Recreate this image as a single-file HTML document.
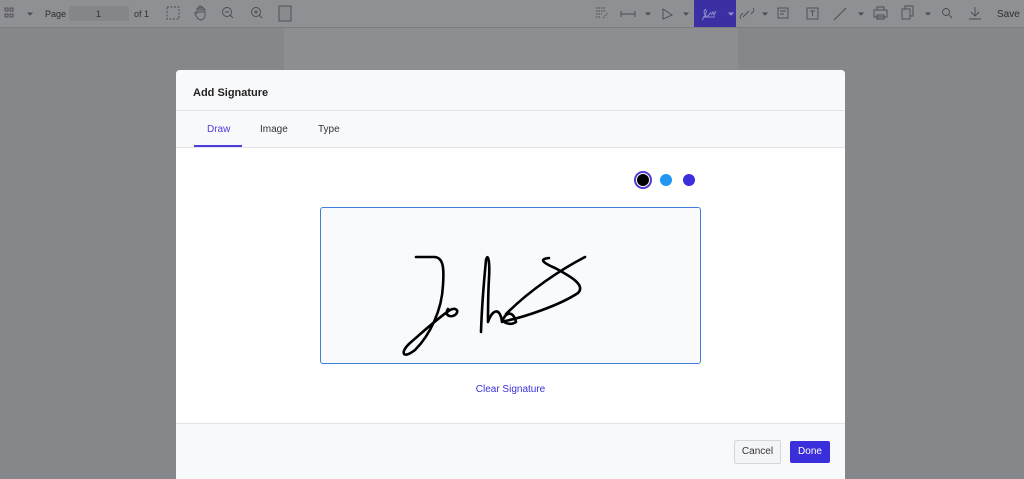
<!DOCTYPE html>
<html><head><style>
body{margin:0;width:1024px;height:478px;overflow:hidden;background:#86878b;font-family:"Liberation Sans",sans-serif;position:relative}
.tb{position:absolute;left:0;top:0;width:1024px;height:27px;background:#8f9094;border-bottom:1px solid #7c7d81;font-size:9px;color:#2e2f33}
.page{position:absolute;left:284px;top:28px;width:454px;height:450px;background:#8d8e92}
.t{position:absolute;top:9px}
.modal{position:absolute;left:176px;top:70px;width:669px;height:408px;background:#fff;border-radius:4px 4px 0 0}
.hd{height:40px;background:#f8f9fb;border-bottom:1px solid #e2e4e8;font-size:11px;font-weight:bold;color:#222;line-height:46px;padding-left:17px;border-radius:4px 4px 0 0}
.tabs{height:36px;background:#f8f9fb;border-bottom:1px solid #e2e4e8;position:relative;font-size:10px;color:#333}
.tabs span{position:absolute;top:13px}
.ft{position:absolute;left:0;top:353px;width:669px;height:55px;background:#f8f9fb;border-top:1px solid #e2e4e8}
.btn{position:absolute;top:16px;height:22px;line-height:22px;font-size:10px;text-align:center;border-radius:2px;box-sizing:border-box}
</style></head><body>
<div class="tb">
<svg width="1024" height="27" style="position:absolute;left:0;top:0" fill="none" stroke="#4a4b50" stroke-width="0.9">
<rect x="5" y="8" width="3" height="3"/><rect x="10" y="8" width="3" height="3"/><rect x="5" y="14" width="3" height="3"/><rect x="10" y="14" width="3" height="3"/>
<path d="M28 13h4l-2 2z" fill="#4a4b50"/>
<path d="M71 13l2-2v4zM122 11l2 2-2 2z" fill="#6a6b70" stroke="none"/>
<rect x="167" y="7" width="12" height="12" stroke-dasharray="2 1.5"/>
<path d="M197 14v-5a1 1 0 0 1 2 0v4-6a1 1 0 0 1 2 0v6-5a1 1 0 0 1 2 0v5-3a1 1 0 0 1 2 0v5c0 3-2 5-4 5s-3-1-4-3l-2-3a1 1 0 0 1 2-1z"/>
<circle cx="227" cy="12" r="4.5"/><path d="M230 15l3 3M225 12h4"/>
<circle cx="256" cy="12" r="4.5"/><path d="M259 15l3 3M254 12h4M256 10v4"/>
<rect x="279" y="6" width="12" height="15" fill="#8a8b8f"/>
<path d="M596 8h9M596 11h9M596 14h6M596 17h5M603 18l5-5" stroke-dasharray="1.5 1"/>
<path d="M621 14h14M621 11v6M635 11v6"/><path d="M646 13h4l-2 2zM684 13h4l-2 2zM763 13h4l-2 2zM859 13h4l-2 2zM926 13h4l-2 2z" fill="#4a4b50"/>
<path d="M663 9l9 6-9 4z"/>
<path d="M743 17l6-6M741 19a3 3 0 0 1 0-4l2-2M753 8a3 3 0 0 1 0 4l-2 2"/>
<rect x="778" y="8" width="10" height="10"/><path d="M780 11h6M780 14h4"/>
<rect x="807" y="8" width="11" height="11"/><path d="M810 11h5M812.5 11v5"/>
<path d="M834 20l12-12"/>
<rect x="874" y="10" width="13" height="7"/><path d="M877 10V7h7v3M877 15h7v4h-7z"/>
<rect x="902" y="9" width="8" height="10"/><path d="M905 9V6h8v10h-3"/>
<circle cx="946" cy="12" r="3.5"/><path d="M949 15l3 3"/>
<path d="M975 7v9M971 12l4 4 4-4M969 19h12"/>
</svg>
<span class="t" style="left:45px">Page</span>
<div style="position:absolute;left:69px;top:6px;width:60px;height:15px;background:#85868a;border-radius:2px"></div>
<span class="t" style="left:96px">1</span>
<span class="t" style="left:134px">of 1</span>
<div style="position:absolute;left:694px;top:0;width:42px;height:27px;background:#3b2fa3"></div>
<svg width="42" height="27" style="position:absolute;left:694px;top:0" fill="none" stroke="#8f90c8" stroke-width="1"><path d="M8 20c3-3 5-8 4-10s-3 2-1 5 4 0 6-3M17 15l2-3 1 3 2-4M9 17h12"/><path d="M35 13h4l-2 2z" fill="#8f90c8"/></svg>
<span class="t" style="left:997px;font-size:10px">Save</span>
</div>
<div class="page"></div>
<div class="modal">
<div class="hd">Add Signature</div>
<div class="tabs"><span style="left:31px;color:#4a3ddb">Draw</span><span style="left:84px">Image</span><span style="left:142px">Type</span>
<div style="position:absolute;left:18px;top:34px;width:48px;height:2px;background:#4a3ddb"></div></div>
<div style="position:absolute;left:458px;top:101px;width:18px;height:18px;border:2px solid #4a3ddb;border-radius:50%;box-sizing:border-box;background:#fff"></div>
<div style="position:absolute;left:461px;top:104px;width:12px;height:12px;background:#000;border-radius:50%"></div>
<div style="position:absolute;left:484px;top:104px;width:12px;height:12px;background:#2196f3;border-radius:50%"></div>
<div style="position:absolute;left:507px;top:104px;width:12px;height:12px;background:#3b2fdb;border-radius:50%"></div>
<div style="position:absolute;left:144px;top:137px;width:379px;height:155px;border:1.5px solid #3f7fd9;border-radius:3px;background:#f8fafc"></div>
<div style="position:absolute;left:0;top:314px;width:669px;text-align:center;font-size:10px;color:#3b2fdb">Clear Signature</div>
<div class="ft">
<div class="btn" style="left:558px;width:47px;border:1px solid #d5d7db;background:#f4f5f7;color:#333;top:16px;height:24px;line-height:22px">Cancel</div>
<div class="btn" style="left:614px;width:40px;background:#3b2fdb;color:#fff;top:17px;height:22px">Done</div>
</div>
</div>
<svg width="1024" height="478" style="position:absolute;left:0;top:0" fill="none" stroke="#000" stroke-width="2.6" stroke-linecap="round" stroke-linejoin="round">
<path d="M416 257L434 257C444 257 444 270 443 285C442 310 430 335 415 350C402 360 400 352 410 343C425 330 438 318 450 310C456 307 460 311 455 315C450 318 444 315 448 309"/>
<path d="M481 332C482 300 484 282 486 260C488 252 490 262 489 278C488 295 488 312 488 322C492 310 500 306 502 322C505 312 513 310 516 322C512 325 506 324 503 321"/>
<path d="M505 321C525 317 560 305 578 293C586 285 570 276 555 268C541 262 540 259 549 258"/>
<path d="M585 257C560 270 530 290 506 314"/>
</svg>
</body></html>
